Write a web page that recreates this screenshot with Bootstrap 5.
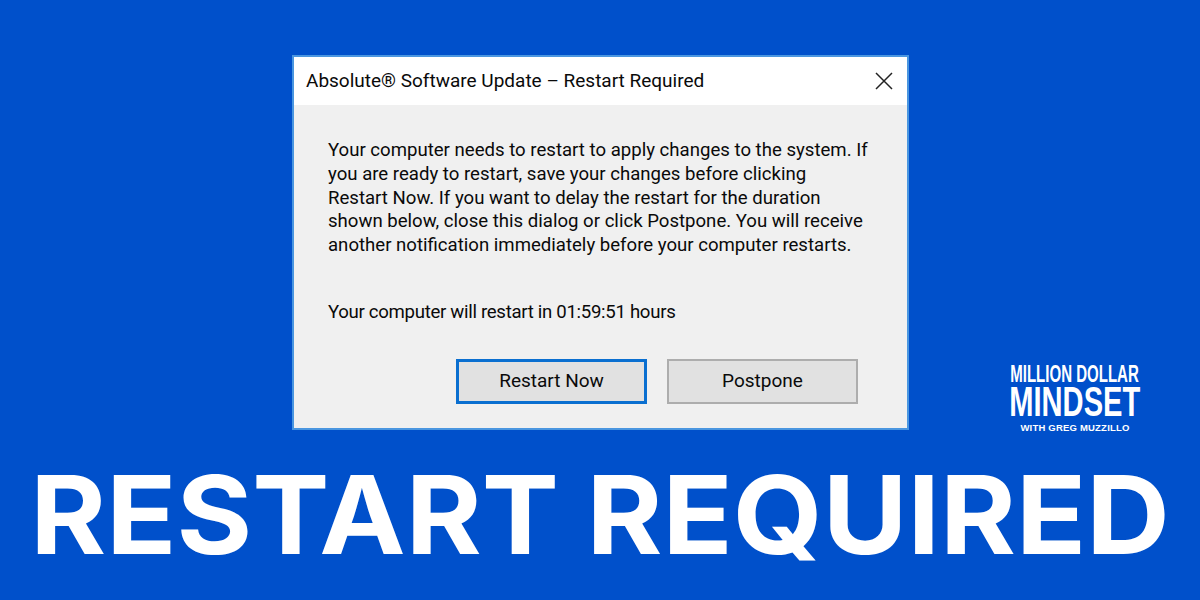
<!DOCTYPE html>
<html lang="en">
<head>
    <meta charset="UTF-8">
    <title>Restart Required</title>
    <link href="https://cdn.jsdelivr.net/npm/bootstrap@5.3.0/dist/css/bootstrap.min.css" rel="stylesheet">
    <style>
        html, body { height: 100%; }
        body { background: #0050cb; overflow: hidden; }
        .top-row { height: 440px; padding-top: 55px; padding-left: 292px; }
        .win { width: 617px; height: 375px; border: 2px solid #4a96e0; background: #f0f0f0; font-family: Roboto, sans-serif; color: #0a0a0a; }
        .win-title { height: 48px; background: #fff; padding-left: 12px; padding-right: 14px; font-size: 19px; }
        .win-body { padding: 34px 20px 0 34px; font-size: 18.6px; line-height: 23.75px; }
        .win-body p { margin: 0; white-space: nowrap; }
        .win-timer { margin-top: 43px !important; letter-spacing: -.3px; }
        .win-btns { margin-top: 34px; padding-left: 128px; gap: 20px; }
        .win-btn { width: 191px; height: 45px; background: #e1e1e1; border: 2px solid #adadad; border-radius: 0; font-size: 19px; color: #0a0a0a; padding: 0; }
        .win-btn.default { border: 3px solid #0a6fd0; }
        .brand { width: 150px; margin-left: 91px; margin-top: 309px; color: #fff; }
        .brand div { white-space: nowrap; font-family: "Liberation Sans", sans-serif; font-weight: 700; }
        .brand-a { font-size: 23.5px; line-height: 20px; transform: scaleX(.64); }
        .brand-b { font-size: 43px; line-height: 34px; transform: scaleX(.677); }
        .brand-c { font-size: 9.5px; line-height: 12px; letter-spacing: .2px; margin-top: 4px; }
        .headline { font-family: Inter, sans-serif; font-weight: 700; font-size: 109px; line-height: 1; color: #fff; text-align: center; white-space: nowrap; margin-top: 20px; transform: scaleX(1.062); }
    </style>
</head>
<body>
<div class="top-row d-flex">
    <div class="win d-flex flex-column">
        <div class="win-title d-flex align-items-center justify-content-between">
            <span>Absolute® Software Update – Restart Required</span>
            <svg width="18" height="18" viewBox="0 0 18 18"><path d="M1 1 17 17M17 1 1 17" stroke="#222" stroke-width="1.5" fill="none"/></svg>
        </div>
        <div class="win-body">
            <p>Your computer needs to restart to apply changes to the system. If</p>
            <p>you are ready to restart, save your changes before clicking</p>
            <p>Restart Now. If you want to delay the restart for the duration</p>
            <p>shown below, close this dialog or click Postpone. You will receive</p>
            <p>another notification immediately before your computer restarts.</p>
            <p class="win-timer">Your computer will restart in 01:59:51 hours</p>
            <div class="win-btns d-flex">
                <button type="button" class="btn win-btn default">Restart Now</button>
                <button type="button" class="btn win-btn">Postpone</button>
            </div>
        </div>
    </div>
    <div class="brand d-flex flex-column align-items-center">
        <div class="brand-a">MILLION DOLLAR</div>
        <div class="brand-b">MINDSET</div>
        <div class="brand-c">WITH GREG MUZZILLO</div>
    </div>
</div>
<div class="headline">RESTART REQUIRED</div>
<script src="https://cdn.jsdelivr.net/npm/bootstrap@5.3.0/dist/js/bootstrap.bundle.min.js"></script>
</body>
</html>
